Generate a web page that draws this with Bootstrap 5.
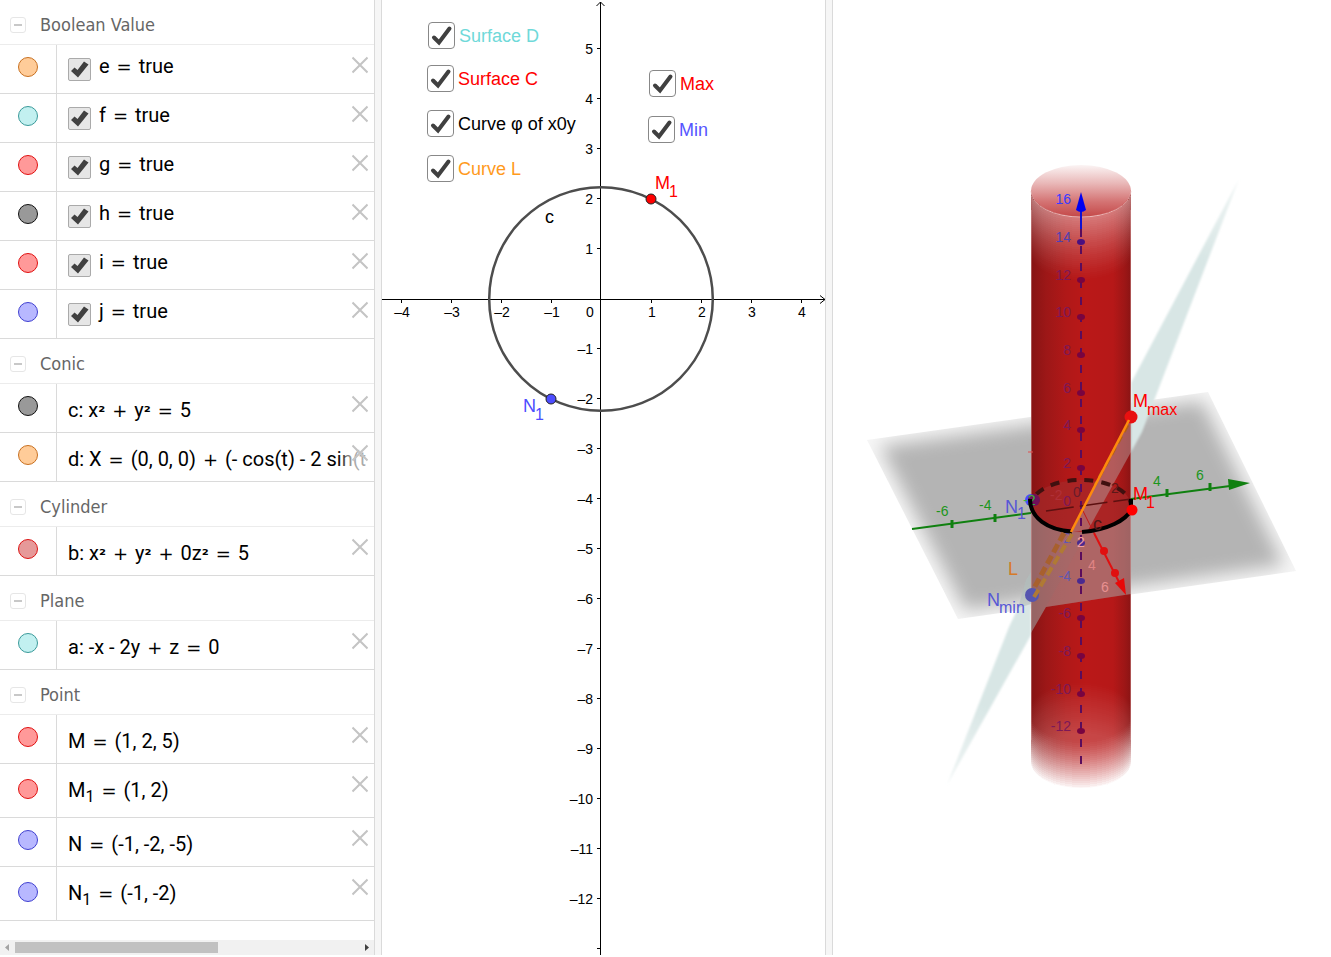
<!DOCTYPE html>
<html lang="en">
<head>
<meta charset="utf-8">
<meta name="viewport" content="width=device-width, initial-scale=1">
<title>Cylinder and plane</title>
<link href="https://cdn.jsdelivr.net/npm/bootstrap@5.3.0/dist/css/bootstrap.min.css" rel="stylesheet">
<style>
body { font-family: "Liberation Sans", sans-serif; color: #000; }
.workspace { display: grid; grid-template-columns: 375fr 7px 443fr 8px 498fr; grid-template-rows: 100%; padding-bottom: 2px; }
.splitter { background: #f6f6f6; border: 0 solid #dadada; border-right-width: 1px; }
.splitter.both { border-left-width: 1px; }
.algebra { border-right: 1px solid #dadada; }
.group-head { height: 45px; padding: 5px 0 0 10px; gap: 14px; border-bottom: 1px solid #ececec; font: 18px "DejaVu Sans Condensed", "DejaVu Sans", sans-serif; color: #666; }
.toggle { width: 16px; height: 16px; border: 1px solid #e6e6e6; border-radius: 3px; background: #fff; }
.toggle::before { content: ""; width: 8px; height: 2px; background: #c8c8c8; }
.entry { height: 49px; border-bottom: 1px solid #dadada; font: 20px/24px Roboto, sans-serif; }
.entry.tall { height: 54px; }
.marble-cell { flex: 0 0 57px; border-right: 1px solid #dadada; padding-bottom: 4px; }
.marble { width: 20px; height: 20px; border: 1px solid; border-radius: 50%; }
.orange { background: #ffcc99; border-color: #c87020; }
.teal { background: #c2f0f0; border-color: #3a9a9a; }
.red { background: #ff9999; border-color: #e01010; }
.rose { background: #e69999; border-color: #dc1414; }
.gray { background: #999; border-color: #111; }
.blue { background: #b8b8ff; border-color: #4040d0; }
.formula { padding: 14px 0 0 11px; }
.entry sub { font-size: 16px; line-height: 0; bottom: -5px; }
.op { font: 18px/0 "DejaVu Sans", sans-serif; margin: 0 2px; }
.sq { font: bold 16px/0 "DejaVu Sans", sans-serif; }
.bool { padding: 9px 0 0 11px; gap: 8px; }
.form-check-input.tick { margin: 4px 0 0; width: 23px; height: 23px; flex: none; border: 1px solid #aaa; border-radius: 2px; background: #e6e6e6 url("data:image/svg+xml,%3Csvg xmlns='http://www.w3.org/2000/svg' viewBox='0 0 21 21'%3E%3Cpath d='M2 12l3.500-3.500 3 2.500L15 2.500l4.500 3L9 18.500z' fill='%23404040'/%3E%3C/svg%3E") center/21px no-repeat; }
.remove { position: absolute; right: 0; top: 0; width: 36px; height: 40px; padding: 0 0 0 14px; border: 0; background: linear-gradient(90deg, #fff0, #fffa 40%); line-height: 0; text-align: left; }
.hbar { height: 15px; background: #f1f1f1; }
.hbar .arrow { width: 15px; height: 15px; border: 0; padding: 0; background: none; line-height: 0; }
.track { padding: 2px 0; }
.thumb { width: 59%; height: 11px; background: #c1c1c1; }
.canvas-check { position: absolute; display: flex; gap: 4px; font-size: 18px; line-height: 29px; white-space: nowrap; }
.canvas-check .form-check-input { margin: 0; width: 27px; height: 27px; border: 1px solid #888; border-radius: 4px; background: #fff url("data:image/svg+xml,%3Csvg xmlns='http://www.w3.org/2000/svg' viewBox='0 0 27 27'%3E%3Cpath d='M6 15.500l5 5L21.500 6.500' fill='none' stroke='%23404040' stroke-width='4' stroke-linecap='round' stroke-linejoin='miter'/%3E%3C/svg%3E") center/27px no-repeat; }
svg text { font-family: "Liberation Sans", sans-serif; }
.t18 { font-size: 18px; } .t16 { font-size: 16px; } .t14 { font-size: 14px; }
</style>
</head>
<body>
<main class="workspace vh-100 overflow-hidden">
  <section class="algebra d-flex flex-column overflow-hidden" aria-label="Algebra">
    <div id="list" class="flex-grow-1 overflow-hidden"></div>
    <div class="hbar d-flex flex-shrink-0">
      <button class="arrow" aria-label="Scroll left"><svg width="15" height="15"><path d="M9 4v7L5 7.500z" fill="#a3a3a3"/></svg></button>
      <div class="track flex-grow-1"><div class="thumb"></div></div>
      <button class="arrow" aria-label="Scroll right"><svg width="15" height="15"><path d="M6 4v7l4-3.500z" fill="#404040"/></svg></button>
    </div>
  </section>
  <div class="splitter"></div>
  <section class="position-relative overflow-hidden" aria-label="Graphics">
    <svg class="d-block w-100 h-100" viewBox="382 0 443 955" preserveAspectRatio="xMinYMin meet">
      <g id="axes" stroke="#000" fill="none">
        <path d="M382 299.500H825M600.500 2V955M820 295.500l5 4-5 4M596.500 6l4-4 4 4"/>
      </g>
      <g id="axisLabels" class="t14"></g>
      <circle cx="601" cy="299" r="111.800" fill="none" stroke="#4d4d4d" stroke-width="2.500"/>
      <circle cx="651" cy="199" r="5" fill="#f00" stroke="#222"/>
      <circle cx="551" cy="399" r="5" fill="#4d4dff" stroke="#222"/>
      <text class="t18" x="545" y="223">c</text>
      <g fill="#f00"><text class="t18" x="655" y="189">M</text><text class="t16" x="669" y="197">1</text></g>
      <g fill="#4d4dff"><text class="t18" x="523" y="412">N</text><text class="t16" x="535" y="420">1</text></g>
    </svg>
    <div id="checks"></div>
  </section>
  <div class="splitter both"></div>
  <section class="overflow-hidden" aria-label="3D Graphics">
    <svg class="d-block w-100 h-100" viewBox="833 0 498 955" preserveAspectRatio="xMinYMin meet">
      <defs>
        <filter id="soft" x="-20%" y="-20%" width="140%" height="140%"><feGaussianBlur stdDeviation="9"/></filter>
        <filter id="soft2" x="-20%" y="-20%" width="140%" height="140%"><feGaussianBlur stdDeviation="1"/></filter>
        <clipPath id="planeClip"><path d="M867 440L1208 392 1296 571 958 619z"/></clipPath>
        <clipPath id="cyl"><path d="M1030 190A51 27 0 0 1 1132 190V762A51 27 0 0 1 1030 762z"/></clipPath>
        <linearGradient id="body"><stop offset="0" stop-color="#861414"/><stop offset=".15" stop-color="#9c1717"/><stop offset=".35" stop-color="#b01818"/><stop offset=".55" stop-color="#ba1818"/><stop offset=".82" stop-color="#b61818"/><stop offset=".94" stop-color="#9c1616"/><stop offset="1" stop-color="#8a1414"/></linearGradient>
        <linearGradient id="inside" x2="0" y2="1"><stop offset="0" stop-color="#fbf4f4"/><stop offset=".35" stop-color="#e9b8b8"/><stop offset=".7" stop-color="#d47474"/><stop offset="1" stop-color="#c44848"/></linearGradient>
        <linearGradient id="fadeUp" gradientUnits="userSpaceOnUse" x1="1238" y1="180" x2="1200" y2="260"><stop offset="0" stop-color="#d8e6e5" stop-opacity=".4"/><stop offset="1" stop-color="#d8e6e5"/></linearGradient>
        <linearGradient id="fadeDown" gradientUnits="userSpaceOnUse" x1="948" y1="783" x2="984" y2="705"><stop offset="0" stop-color="#d8e6e5" stop-opacity=".4"/><stop offset="1" stop-color="#d8e6e5"/></linearGradient>
      </defs>
      <path d="M867 440L1208 392 1296 571 958 619z" fill="#b8b8b8" opacity=".12"/>
      <g clip-path="url(#planeClip)"><path d="M880 446L1202 401 1284 565 965 610z" fill="#b4b4b4" filter="url(#soft)"/></g>
      <path d="M1239 179L1131 383V452L1142 432 1160 385z" fill="url(#fadeUp)" filter="url(#soft2)"/>
      <path d="M947 785L1009 627 1018 608 1031 604V635z" fill="url(#fadeDown)" filter="url(#soft2)"/>
      <path d="M1018 608L1026 580 1031 572V604z" fill="#b0c0be" opacity=".6"/>
      <ellipse cx="1081" cy="191" rx="50" ry="26" fill="url(#inside)"/>
      <path d="M1031 190A50 27 0 0 0 1131 190V762A50 26 0 0 1 1031 762z" fill="url(#body)"/>
      <g id="fades"></g>
      <path d="M1031 191A50 26 0 0 0 1131 191" fill="none" stroke="#f0c4c4" opacity=".7"/>
      <ellipse cx="1081" cy="506" rx="50" ry="26" fill="#a52a2a" opacity=".7"/>
      <path d="M1031 506A50 26 0 0 0 1131 506V594L1046 607 1031 633z" fill="#a0a0a0" opacity=".58"/>
      <path d="M1131 417V452L1046 607 1131 594V508A50 26 0 0 1 1071 532z" fill="#c06060" opacity=".2"/>
      <path d="M1131 417V452L1088 530 1071 532z" fill="#b09090" opacity=".5"/>
      <path d="M1031.500 210V740M1130.500 210V740" stroke="#d8a0a0" opacity=".45"/>
      <g id="zaxis"></g>
      <path d="M1081 506A50 26 0 0 1 1031 506A50 26 0 0 1 1131 506" fill="none" stroke="#40100f" stroke-width="4" stroke-dasharray="0 64 9 8 9 8 9 8 9 8 9 8 9 8 9 90"/>
      <path d="M1046 511L1131 499" stroke="#5c1010" stroke-width="1.500" stroke-dasharray="28 6"/>
      <g stroke="#108010" fill="#108010" stroke-width="2">
        <path d="M912 529L1031 513M1131 499L1230 486"/><path d="M952 520v8M995 514v8M1167 489v8M1210 483v8" stroke-width="3"/>
        <path d="M1228 479l22 4-21 7z" stroke="none"/>
      </g>
      <g class="t14" fill="#1c961c"><text x="936" y="516">-6</text><text x="979" y="510">-4</text><text x="1153" y="486">4</text><text x="1196" y="480">6</text></g>
      <circle cx="1031" cy="500" r="6" fill="#4b4bff"/><circle cx="1034" cy="500" r="6" fill="#70105a"/>
      <text class="t14" x="1023" y="505" fill="#3cb43c">-2</text>
      <path d="M1028 452h5" stroke="#e05050"/>
      <path d="M1083 511L1094 533" stroke="#c01818" stroke-width="1"/>
      <path d="M1094 533L1120 584" stroke="#e01010" stroke-width="2"/>
      <circle cx="1104" cy="551" r="4" fill="#e01010"/><circle cx="1115" cy="573" r="4" fill="#e01010"/>
      <path d="M1115 583l9-5 2 17z" fill="#e80808"/>
      <path d="M1030 499C1030 518 1048 530 1072 531.500M1082 532C1108 530 1126 520 1131 510V499" fill="none" stroke="#000" stroke-width="4"/>
      <circle cx="1132" cy="510" r="5.500" fill="#f00"/>
      <circle cx="1131" cy="417" r="6.500" fill="#e81010"/>
      <circle cx="1032" cy="595" r="7" fill="#5555b0"/>
      <path d="M1064 533L1033 590" stroke="#a8602e" stroke-width="5" stroke-dasharray="9 4"/>
      <path d="M1072 534L1034 597" stroke="#b07a34" stroke-width="4" stroke-dasharray="9 4"/>
      <path d="M1128 425L1095 485" stroke="#b06018" stroke-width="3" stroke-dasharray="8 5"/>
      <path d="M1129 420L1071 532" stroke="#ff8a0c" stroke-width="2.500"/>
      <g class="t14"><text x="1050" y="500" fill="#b03038">-2</text><text x="1077" y="547" fill="#f0a0a0">2</text><text x="1088" y="570" fill="#e08484">4</text><text x="1101" y="592" fill="#e89090">6</text>
      <text x="1111" y="493" fill="#5c1818">2</text><text x="1073" y="497" fill="#681c2c">0</text></g>
      <text class="t18" x="1093" y="530" fill="#4c1818">c</text>
      <g fill="#f00"><text class="t18" x="1133" y="407">M</text><text class="t16" x="1147" y="415">max</text><text class="t18" x="1133" y="500">M</text><text class="t16" x="1146" y="508">1</text></g>
      <g fill="#5757d6"><text class="t18" x="1005" y="513">N</text><text class="t16" x="1017" y="519">1</text><text class="t18" x="987" y="606">N</text><text class="t16" x="999" y="613">min</text></g>
      <text class="t18" x="1008" y="575" fill="#d67a28">L</text>
    </svg>
  </section>
</main>
<script src="https://cdn.jsdelivr.net/npm/bootstrap@5.3.0/dist/js/bootstrap.bundle.min.js"></script>
<script>
const groups = [
  ['Boolean Value', [['orange','e'],['teal','f'],['red','g'],['gray','h'],['red','i'],['blue','j']]],
  ['Conic', [['gray','c: x² + y² = 5'],['orange','d: X = (0, 0, 0) + (- cos(t) - 2 sin(t']]],
  ['Cylinder', [['rose','b: x² + y² + 0z² = 5']]],
  ['Plane', [['teal','a: -x - 2y + z = 0']]],
  ['Point', [['red','M = (1, 2, 5)'],['red','M_ = (1, 2)'],['blue','N = (-1, -2, -5)'],['blue','N_ = (-1, -2)']]]
];
const math = s => s.replace(/ ([=+]) /g, ' <span class="op">$1</span> ').replace(/²/g, '<span class="sq">²</span>').replace('_', '<sub>1</sub>');
document.getElementById('list').innerHTML = groups.map(([name, rows]) =>
  `<div class="group-head d-flex align-items-center"><button class="toggle d-flex align-items-center justify-content-center flex-shrink-0 p-0" aria-label="Collapse ${name}"></button><span>${name}</span></div>` +
  rows.map(([color, text]) => `<div class="entry d-flex position-relative text-nowrap overflow-hidden${text.includes('_') ? ' tall' : ''}">
    <div class="marble-cell d-flex align-items-center justify-content-center"><span class="marble ${color}"></span></div>` +
    (text.length === 1
      ? `<div class="bool d-flex"><input class="form-check-input tick" type="checkbox" id="v-${text}" checked><label for="v-${text}">${math(text + ' = true')}</label></div>`
      : `<div class="formula">${math(text)}</div>`) +
    `<button class="remove" aria-label="Delete"><svg width="16" height="40"><path d="M0.500 12.500l15 15m0-15l-15 15" stroke="#c4c4c4" stroke-width="2"/></svg></button></div>`).join('')).join('');

const checks = [['Surface D','#6fd9d9',46,22],['Surface C','#f00',45,65],['Curve φ of x0y','#000',45,110],['Curve L','#ff9a1c',45,155],['Max','#f00',267,70],['Min','#5555ff',266,116]];
document.getElementById('checks').innerHTML = checks.map(([t, c, x, y], i) =>
  `<div class="canvas-check" style="left:${x}px;top:${y}px;color:${c}"><input class="form-check-input" type="checkbox" id="k${i}" checked><label for="k${i}">${t}</label></div>`).join('');

let ticks = '', labels = '';
const num = n => String(n).replace('-', '–');
for (let n = -4; n <= 4; n++) {
  if (n) ticks += `<path d="M${601.5 + 50 * n} 299v4"/>`;
  labels += `<text x="${n ? 602 + 50 * n : 590}" y="317" text-anchor="middle">${num(n)}</text>`;
}
for (let n = -13; n <= 5; n++) {
  if (!n) continue;
  ticks += `<path d="M597 ${298.5 - 50 * n}h4"/>`;
  if (n > -13) labels += `<text x="593" y="${304 - 50 * n}" text-anchor="end">${num(n)}</text>`;
}
document.getElementById('axes').innerHTML += ticks;
document.getElementById('axisLabels').innerHTML = labels;

/* fading rings at both open ends of the cylinder */
let fades = '';
const strip = (y, s, o) => `<path d="M1030 ${y}A51 27 0 0 ${s} 1132 ${y}V${y + 2}A51 27 0 0 ${1 - s} 1030 ${y + 2}z" fill="#fff" opacity="${o}"/>`;
for (let k = 0; k < 32; k++) fades += strip(190 + 2 * k, 0, 0.42 * Math.pow(1 - k / 32, 1.3));
for (let k = 0; k < 56; k++) fades += strip(708 + 2 * k, 1, Math.min(0.2, 0.2 * k / 26));
for (let k = 0; k < 38; k++) fades += strip(712 + 2 * k, 0, Math.min(1, Math.pow(k / 25, 1.3)));
document.getElementById('fades').innerHTML = `<g clip-path="url(#cyl)" shape-rendering="crispEdges">${fades}</g>`;

let z = '<path d="M1081 229V764" stroke="#5a0c5c" stroke-width="2" stroke-dasharray="8 9"/><path d="M1081 210V229" stroke="#1010d0" stroke-width="2"/><path d="M1081 192l5 18q-5 4-10 0z" fill="#0000f0"/>';
for (let n = -12; n <= 16; n += 2) {
  const y = Math.round(505.500 - 18.83 * n);
  if (n && n < 16) z += `<ellipse cx="1081" cy="${y}" rx="4" ry="3" fill="${n > 12 ? '#4a1080' : n < -1 && n > -5 ? '#4a2a90' : '#780440'}"/>`;
  z += `<text class="t14" x="1071" y="${n === 16 ? 204 : y}" text-anchor="end" fill="${n === 16 ? '#3c3cff' : n === 14 ? '#5040b0' : n < -1 && n > -5 ? '#6058b0' : '#7c1858'}">${n}</text>`;
}
document.getElementById('zaxis').innerHTML = z;
</script>
</body>
</html>
